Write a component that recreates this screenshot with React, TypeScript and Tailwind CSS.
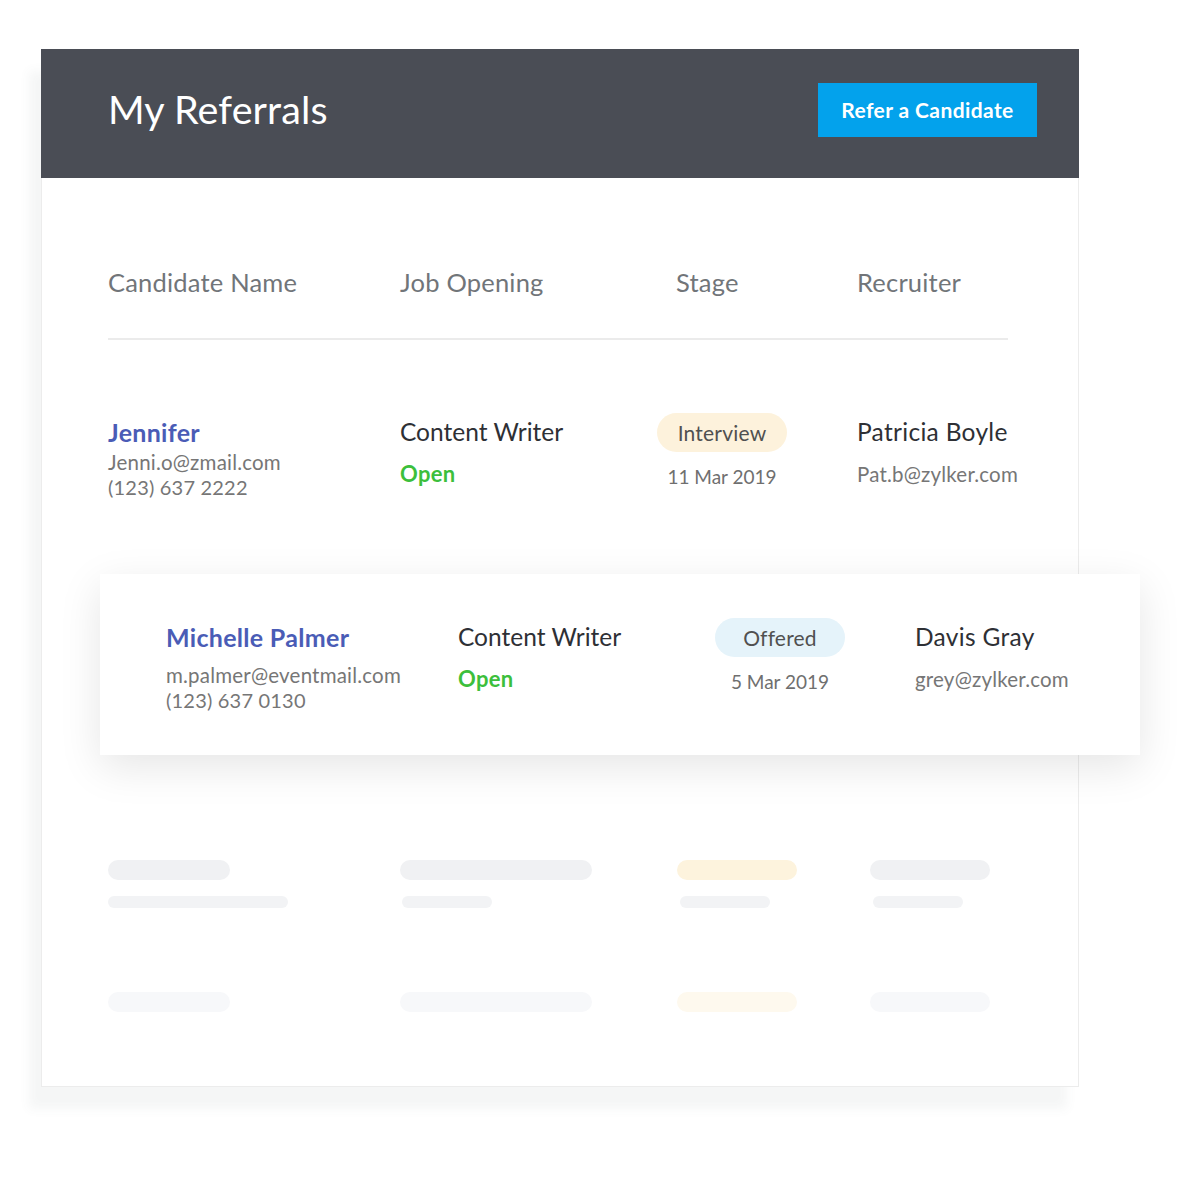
import React from "react";

type Referral = {
  name: string;
  email: string;
  phone: string;
  job: string;
  status: string;
  stage: string;
  stageTone: "yellow" | "blue";
  date: string;
  recruiter: string;
  recruiterEmail: string;
};

const rows: Referral[] = [
  {
    name: "Jennifer",
    email: "Jenni.o@zmail.com",
    phone: "(123) 637 2222",
    job: "Content Writer",
    status: "Open",
    stage: "Interview",
    stageTone: "yellow",
    date: "11 Mar 2019",
    recruiter: "Patricia Boyle",
    recruiterEmail: "Pat.b@zylker.com",
  },
  {
    name: "Michelle Palmer",
    email: "m.palmer@eventmail.com",
    phone: "(123) 637 0130",
    job: "Content Writer",
    status: "Open",
    stage: "Offered",
    stageTone: "blue",
    date: "5 Mar 2019",
    recruiter: "Davis Gray",
    recruiterEmail: "grey@zylker.com",
  },
];

function RowCells({ r, lifted }: { r: Referral; lifted?: boolean }) {
  return (
    <div className="grid grid-cols-[292px_257px_200px_1fr]">
      <div>
        <div className="text-[25px] leading-[28px] font-bold text-[#4a5cb6] tracking-[0.3px]">{r.name}</div>
        <div
          className={
            lifted
              ? "mt-[12px] text-[20.5px] leading-[25px] text-[#767676] tracking-[0.2px]"
              : "mt-[4px] text-[20.5px] leading-[25px] text-[#767676] tracking-[0.2px]"
          }
        >
          {r.email}
        </div>
        <div className="text-[20px] leading-[25px] text-[#767676] tracking-[0.2px]">{r.phone}</div>
      </div>
      <div>
        <div className="text-[24.5px] leading-[28px] text-[#2e3035]">{r.job}</div>
        <div className="mt-[16px] text-[22px] leading-[24px] font-bold text-[#3cbf3c] tracking-[0.3px]">{r.status}</div>
      </div>
      <div className="w-[130px] -mt-[5px]">
        <div
          className={
            r.stageTone === "yellow"
              ? "h-[39px] rounded-full bg-[#fdf2dc] flex items-center justify-center text-[21px] text-[#505050] tracking-[0.2px]"
              : "h-[39px] rounded-full bg-[#e5f3fa] flex items-center justify-center text-[21px] text-[#505050] tracking-[0.2px]"
          }
        >
          {r.stage}
        </div>
        <div className="mt-[13px] text-center text-[19px] leading-[24px] text-[#6f6f6f] whitespace-nowrap">{r.date}</div>
      </div>
      <div>
        <div className="text-[24.5px] leading-[28px] text-[#2e3035] tracking-[0.3px]">{r.recruiter}</div>
        <div className="mt-[16px] text-[20.5px] leading-[24px] text-[#767676] tracking-[0.2px]">{r.recruiterEmail}</div>
      </div>
    </div>
  );
}

function SkeletonRow({ faint }: { faint?: boolean }) {
  const grey = faint ? "bg-[#f7f8fa]" : "bg-[#f0f1f3]";
  const yellow = faint ? "bg-[#fef9ee]" : "bg-[#fdf3dd]";
  return (
    <div className="grid grid-cols-[292px_277px_193px_1fr]">
      <div>
        <div className={`h-[20px] w-[122px] rounded-full ${grey}`} />
        {!faint && <div className="mt-[16px] h-[12px] w-[180px] rounded-full bg-[#f2f3f5]" />}
      </div>
      <div>
        <div className={`h-[20px] w-[192px] rounded-full ${grey}`} />
        {!faint && <div className="mt-[16px] ml-[2px] h-[12px] w-[90px] rounded-full bg-[#f2f3f5]" />}
      </div>
      <div>
        <div className={`h-[20px] w-[120px] rounded-full ${yellow}`} />
        {!faint && <div className="mt-[16px] ml-[3px] h-[12px] w-[90px] rounded-full bg-[#f2f3f5]" />}
      </div>
      <div>
        <div className={`h-[20px] w-[120px] rounded-full ${grey}`} />
        {!faint && <div className="mt-[16px] ml-[3px] h-[12px] w-[90px] rounded-full bg-[#f2f3f5]" />}
      </div>
    </div>
  );
}

export default function App() {
  return (
    <div className="min-h-[1200px] w-[1200px] bg-white pt-[49px] pl-[41px] font-['Lato','Liberation_Sans',sans-serif]">
      <div className="w-[1038px] border border-[#ececec] bg-white shadow-[-12px_22px_10px_rgba(80,95,95,0.06)]">
        {/* header */}
        <div className="h-[129px] -mt-px -mx-px bg-[#4a4d55] flex items-start justify-between pl-[67px] pr-[42px] pt-[34px]">
          <h1 className="mt-[1px] text-[39.5px] leading-[50px] font-normal text-white tracking-[0.1px]">My Referrals</h1>
          <button className="h-[54px] w-[219px] bg-[#03a2ec] text-white text-[21px] font-bold tracking-[0.4px]">
            Refer a Candidate
          </button>
        </div>

        {/* column heads */}
        <div className="mx-[66px] w-[900px] pt-[91px] pb-[43px] border-b-2 border-[#ebebeb] grid grid-cols-[292px_276px_181px_1fr] text-[25.5px] leading-[26px] text-[#717579] tracking-[0.2px]">
          <div>Candidate Name</div>
          <div>Job Opening</div>
          <div>Stage</div>
          <div>Recruiter</div>
        </div>

        <div className="mx-[66px] pt-[78px]">
          <RowCells r={rows[0]} />
        </div>

        <div className="ml-[58px] mt-[74px] w-[1040px] bg-white pl-[66px] pt-[49px] pb-[42px] shadow-[0_12px_40px_rgba(0,0,0,0.10)]">
          <RowCells r={rows[1]} lifted />
        </div>

        <div className="mx-[66px] mt-[105px]">
          <SkeletonRow />
        </div>
        <div className="mx-[66px] mt-[84px] pb-[74px]">
          <SkeletonRow faint />
        </div>
      </div>
    </div>
  );
}
